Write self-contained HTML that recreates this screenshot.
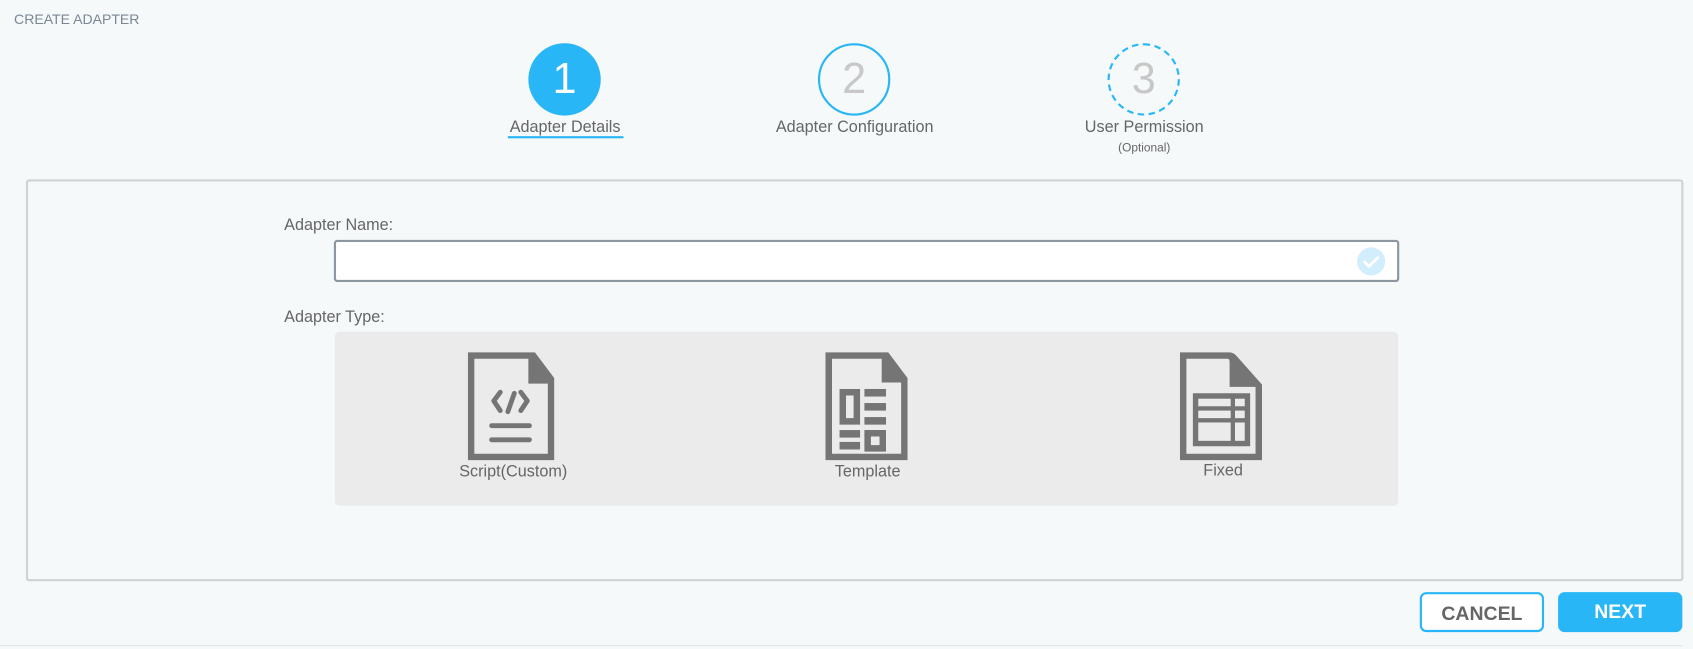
<!DOCTYPE html>
<html><head><meta charset="utf-8"><style>
html,body{margin:0;padding:0;width:1693px;height:649px;overflow:hidden;background:#f5f9fa;font-family:"Liberation Sans",sans-serif;}
#w{position:absolute;left:0;top:0;width:1557px;height:600px;transform:scale(1.0805);transform-origin:0 0;}
.a{position:absolute;}
.t{color:#666;font-size:15px;white-space:nowrap;}
.c{width:64px;height:64px;border-radius:50%;text-align:center;line-height:64px;font-size:40px;font-weight:300;}
.lbl{text-align:center;transform:translateX(-50%);}
.btn{height:37px;border-radius:6px;text-align:center;line-height:37px;font-weight:bold;font-size:18px;box-sizing:border-box;}
</style></head><body><div id="w">
<div class="a" style="left:13px;top:10px;font-size:13px;color:#7b8794;">CREATE ADAPTER</div>

<div class="a c" style="left:489px;top:40px;background:#29b6f6;color:#fff;width:67px;height:67px;line-height:67px;">1</div>
<div class="a c" style="left:757px;top:40px;border:2px solid #29b6f6;color:#c8c8c8;box-sizing:border-box;width:67px;height:67px;line-height:63px;">2</div>
<div class="a c" style="left:1025px;top:40px;border:2px dashed #29b6f6;color:#c8c8c8;box-sizing:border-box;width:67px;height:67px;line-height:63px;">3</div>
<div class="a t lbl" style="left:523px;top:109px;">Adapter Details</div>
<div class="a" style="left:470px;top:126px;width:107px;height:2px;background:#29b6f6;"></div>
<div class="a t lbl" style="left:791px;top:109px;">Adapter Configuration</div>
<div class="a t lbl" style="left:1059px;top:109px;">User Permission</div>
<div class="a lbl" style="left:1059px;top:131px;font-size:11px;color:#666;">(Optional)</div>

<div class="a" style="left:24px;top:166px;width:1530px;height:368px;border:2px solid #cfd3d6;border-radius:3px;"></div>
<div class="a t" style="left:263px;top:200px;">Adapter Name:</div>
<div class="a" style="left:309px;top:222px;width:982px;height:35px;border:2px solid #8c979f;border-radius:3px;background:#fff;"></div>
<svg class="a" style="left:1255px;top:228px" width="28" height="28" viewBox="0 0 28 28"><circle cx="14" cy="14" r="13" fill="#d2edfb"/><path d="M8 14.5l4 4 8-8" stroke="#fff" stroke-width="2.6" fill="none" stroke-linecap="round" stroke-linejoin="round"/></svg>
<div class="a t" style="left:263px;top:285px;">Adapter Type:</div>
<div class="a" style="left:310px;top:307px;width:984px;height:161px;background:#ebebeb;border-radius:4px;"></div>

<svg class="a" style="left:433px;top:326px" width="80" height="100" viewBox="0 0 80 100">
<path d="M0 0H62L80 24V100H0Z" fill="#757575"/><path d="M6 6H56V29H74V94H6Z" fill="#ebebeb"/>
<g stroke="#757575" stroke-width="4.5" stroke-linecap="round" fill="none" stroke-linejoin="round"><path d="M30 37L24 45L30 54"/><path d="M49 37L55 45L49 54"/><path d="M43 38L37 55"/><path d="M22 68H57"/><path d="M22 81H57"/></g></svg>
<div class="a t lbl" style="left:475px;top:428px;">Script(Custom)</div>

<svg class="a" style="left:764px;top:326px" width="76" height="100" viewBox="0 0 76 100">
<path d="M0 0H58L76 24V100H0Z" fill="#757575"/><path d="M6 6H52V28H70V94H6Z" fill="#ebebeb"/>
<g fill="#757575"><path d="M13 34H32V67H13ZM19 40V61H26V40Z" fill-rule="evenodd"/><rect x="36" y="34" width="20" height="7"/><rect x="36" y="47" width="20" height="7"/><rect x="36" y="60" width="20" height="7"/>
<rect x="13" y="72" width="19" height="7"/><rect x="13" y="83" width="19" height="7"/><path d="M36 72H56V92H36ZM42 78V86H50V78Z" fill-rule="evenodd"/></g></svg>
<div class="a t lbl" style="left:803px;top:428px;">Template</div>

<svg class="a" style="left:1092px;top:326px" width="76" height="100" viewBox="0 0 76 100">
<path d="M0 0H45Q50 0 53 4L76 30V100H0Z" fill="#757575"/><path d="M6 6H44Q46 6 46 9V32H70V94H6Z" fill="#ebebeb"/>
<path d="M12 38H65V87H12Z" fill="#757575"/><g fill="#ebebeb"><rect x="17" y="43" width="30" height="7"/><rect x="51" y="43" width="9" height="7"/><rect x="17" y="54" width="30" height="7"/><rect x="51" y="54" width="9" height="7"/><rect x="17" y="65" width="30" height="17"/><rect x="51" y="65" width="9" height="17"/></g></svg>
<div class="a t lbl" style="left:1132px;top:427px;">Fixed</div>

<div class="a btn" style="left:1314px;top:548px;width:115px;border:2px solid #29b6f6;background:#fff;color:#666;">CANCEL</div>
<div class="a btn" style="left:1442px;top:548px;width:115px;background:#29b6f6;color:#fff;">NEXT</div>
<div class="a" style="left:0;top:597px;width:1557px;height:1px;background:#e3e6e8;"></div>
</div></body></html>
